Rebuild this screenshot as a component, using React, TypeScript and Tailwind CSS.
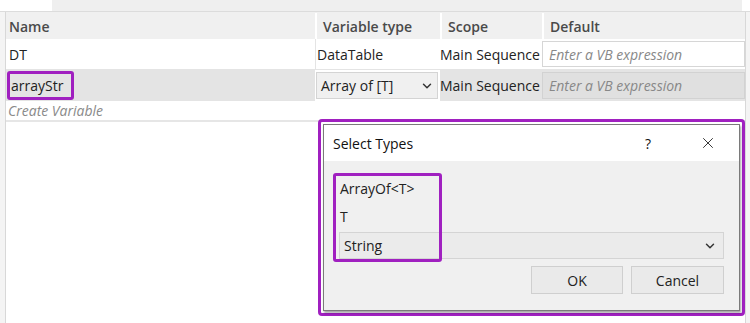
import React from 'react';
import { ChevronDown, X } from 'lucide-react';

const font = { fontFamily: '"Open Sans", "Noto Sans", sans-serif' };

function SelectBox({ label, className }: { label: string; className: string }) {
  return (
    <div className={`flex items-center justify-between border border-[#d4d4d4] ${className}`}>
      <span>{label}</span>
      <ChevronDown className="h-3.5 w-3.5 text-[#333]" strokeWidth={2.5} />
    </div>
  );
}

export default function App() {
  return (
    <div className="flex h-[323px] w-[750px] flex-col overflow-hidden bg-white text-[14px] text-[#222]" style={font}>
      {/* tab strip */}
      <div className="flex h-[12px] shrink-0 border-b border-[#dcdcdc]">
        <div className="w-[52px] bg-white" />
        <div className="flex-1 bg-[#efefef]" />
        <div className="w-[8px] bg-white" />
      </div>

      <div className="flex flex-1">
        <div className="w-[6px] border-r border-[#d8d8d8] bg-[#f4f4f4]" />
        <div className="relative flex flex-1 flex-col">
          {/* header */}
          <div className="flex h-[27px] bg-[#f0f0f0] pt-[1px] font-semibold text-[#4a4a4a]">
            <div className="flex w-[309px] items-center pl-[3px]">Name</div>
            <div className="flex w-[125px] items-center border-l-2 border-white pl-[6px]">Variable type</div>
            <div className="flex w-[102px] items-center border-l-2 border-white pl-[6px]">Scope</div>
            <div className="flex flex-1 items-center border-l-2 border-white pl-[6px]">Default</div>
          </div>

          {/* DT row */}
          <div className="flex h-[31px] border-b border-[#e4e4e4]">
            <div className="flex w-[309px] items-center pl-[3px]">DT</div>
            <div className="flex w-[125px] items-center border-l border-[#e4e4e4] pl-[1px]">DataTable</div>
            <div className="flex w-[102px] items-center">Main Sequence</div>
            <div className="flex flex-1 items-center py-[2px]">
              <div className="flex h-full w-full items-center border border-[#d6d6d6] bg-white pl-[6px] italic text-[#888]">
                Enter a VB expression
              </div>
            </div>
          </div>

          {/* arrayStr row */}
          <div className="flex h-[31px] bg-[#e4e4e4]">
            <div className="flex w-[309px] items-center pl-[1px]">
              <div className="flex h-[29px] w-[67px] items-center rounded-[3px] border-[3px] border-[#a020c0] pl-[1px]">
                arrayStr
              </div>
            </div>
            <div className="flex w-[125px] items-center bg-white py-[2px] pl-[1px] pr-[2px]">
              <SelectBox label="Array of [T]" className="h-full w-full bg-[#f0f0f0] pl-[4px] pr-[3px]" />
            </div>
            <div className="flex w-[102px] items-center">Main Sequence</div>
            <div className="flex flex-1 items-center py-[2px]">
              <div className="flex h-full w-full items-center border border-[#d2d2d2] bg-[#e0e0e0] pl-[6px] italic text-[#888]">
                Enter a VB expression
              </div>
            </div>
          </div>

          {/* create row */}
          <div className="flex h-[21px] items-center border-b-2 border-[#e6e6e6] pl-[2px] italic text-[#8a8a8a]">
            Create Variable
          </div>

          <div className="flex-1 bg-white" />

          {/* Select Types dialog */}
          <div className="absolute left-[312px] top-[107px] h-[197px] w-[427px] rounded-[4px] border-[3px] border-[#a020c0] bg-white p-[2px]">
            <div className="flex h-full flex-col border border-[#7a7a7a] bg-[#f0f0f0] shadow-[1px_2px_2px_rgba(0,0,0,0.35)]">
              <div className="flex h-[36px] items-center bg-white pl-[9px] pr-[22px] text-[14px] text-[#111]">
                <span className="flex-1">Select Types</span>
                <span className="mr-[48px]">?</span>
                <X className="h-[18px] w-[18px] text-[#333]" strokeWidth={1.3} />
              </div>
              <div className="relative flex flex-1 flex-col px-[15px] pt-[13px]">
                <div className="flex h-[28px] items-center pl-[1px]">ArrayOf&lt;T&gt;</div>
                <div className="flex h-[28px] items-center pl-[1px]">T</div>
                <SelectBox label="String" className="mt-[2px] h-[27px] bg-[#ebebeb] pl-[4px] pr-[6px]" />
                <div className="mt-[7px] flex justify-end gap-[8px]">
                  <div className="flex h-[28px] w-[92px] items-center justify-center border border-[#cfcfcf] bg-[#eaeaea]">OK</div>
                  <div className="flex h-[28px] w-[93px] items-center justify-center border border-[#cfcfcf] bg-[#eaeaea]">Cancel</div>
                </div>
                <div className="absolute left-[9px] top-[12px] h-[89px] w-[109px] rounded-[3px] border-[3px] border-[#a020c0]" />
              </div>
            </div>
          </div>
        </div>
        <div className="w-[5px] border-l border-[#d8d8d8] bg-[#f4f4f4]" />
      </div>
    </div>
  );
}
